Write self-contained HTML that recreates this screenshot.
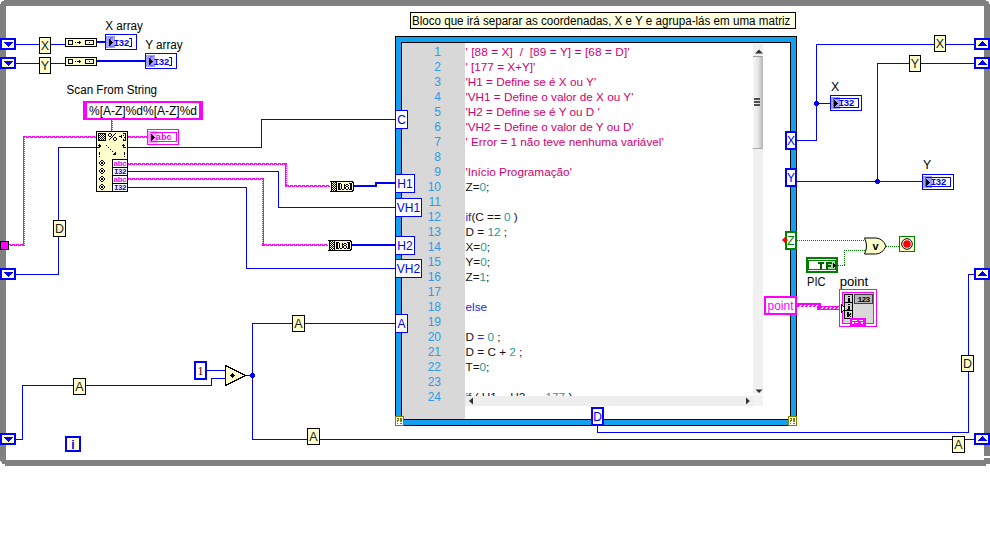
<!DOCTYPE html>
<html><head><meta charset="utf-8"><style>
html,body{margin:0;padding:0;background:#fff;}
svg{display:block;font-family:"Liberation Sans",sans-serif;}
</style></head><body>
<svg width="990" height="543" viewBox="0 0 990 543" shape-rendering="crispEdges">
<rect x="0" y="0" width="990" height="466" fill="#808080"/>
<rect x="6" y="6" width="978" height="454" fill="#FFFFFF"/>
<path d="M0 0h4v1h-2v1h-1v2h-1z" fill="#fff"/>
<path d="M0 461h1v1h1v2h3v2h-5z" fill="#fff"/>
<rect x="984" y="456" width="6" height="2" fill="#fff"/>
<rect x="986" y="464" width="4" height="2" fill="#fff"/>
<path d="M986 0h4v4h-1v-2h-1v-1h-2z" fill="#fff"/>
<rect x="16" y="44" width="23" height="1" fill="#0000FF"/>
<rect x="51" y="44" width="14" height="1" fill="#0000FF"/>
<rect x="97" y="41" width="8" height="2" fill="#0000FF"/>
<rect x="16" y="63" width="23" height="1" fill="#0000FF"/>
<rect x="51" y="63" width="14" height="1" fill="#0000FF"/>
<rect x="97" y="60" width="48" height="2" fill="#0000FF"/>
<rect x="16" y="274" width="43" height="1" fill="#0000FF"/>
<rect x="58" y="147" width="1" height="128" fill="#0000FF"/>
<rect x="58" y="147" width="203" height="1" fill="#0000FF"/>
<rect x="261" y="119" width="1" height="29" fill="#0000FF"/>
<rect x="261" y="119" width="134" height="1" fill="#0000FF"/>
<rect x="128" y="171" width="151" height="1" fill="#0000FF"/>
<rect x="278" y="171" width="1" height="37" fill="#0000FF"/>
<rect x="278" y="207" width="117" height="1" fill="#0000FF"/>
<rect x="128" y="187" width="119" height="1" fill="#0000FF"/>
<rect x="246" y="187" width="1" height="82" fill="#0000FF"/>
<rect x="246" y="268" width="149" height="1" fill="#0000FF"/>
<rect x="354" y="185" width="22" height="2" fill="#0000FF"/>
<rect x="375" y="182" width="2" height="5" fill="#0000FF"/>
<rect x="375" y="182" width="20" height="2" fill="#0000FF"/>
<rect x="351" y="244" width="44" height="2" fill="#0000FF"/>
<rect x="16" y="439" width="7" height="1" fill="#0000FF"/>
<rect x="22" y="385" width="1" height="55" fill="#0000FF"/>
<rect x="22" y="385" width="190" height="1" fill="#0000FF"/>
<rect x="211" y="378" width="1" height="8" fill="#0000FF"/>
<rect x="211" y="378" width="15" height="1" fill="#0000FF"/>
<rect x="207" y="370" width="19" height="1" fill="#0000FF"/>
<rect x="252" y="323" width="1" height="117" fill="#0000FF"/>
<rect x="252" y="323" width="143" height="1" fill="#0000FF"/>
<rect x="252" y="439" width="722" height="1" fill="#0000FF"/>
<rect x="246" y="375" width="6" height="1" fill="#0000FF"/>
<rect x="597" y="425" width="1" height="8" fill="#0000FF"/>
<rect x="597" y="432" width="372" height="1" fill="#0000FF"/>
<rect x="968" y="274" width="1" height="159" fill="#0000FF"/>
<rect x="968" y="274" width="6" height="1" fill="#0000FF"/>
<rect x="797" y="140" width="20" height="1" fill="#0000FF"/>
<rect x="816" y="44" width="1" height="97" fill="#0000FF"/>
<rect x="816" y="44" width="158" height="1" fill="#0000FF"/>
<rect x="797" y="181" width="125" height="1" fill="#0000FF"/>
<rect x="877" y="63" width="1" height="119" fill="#0000FF"/>
<rect x="877" y="63" width="97" height="1" fill="#0000FF"/>
<rect x="816" y="103" width="14" height="1" fill="#0000FF"/>
<circle cx="816.5" cy="103.5" r="2.5" fill="#0000FF"/>
<circle cx="877.5" cy="181.5" r="2.5" fill="#0000FF"/>
<circle cx="252.5" cy="375.5" r="2.5" fill="#0000FF"/>
<defs><pattern id="ph" width="4" height="2" patternUnits="userSpaceOnUse"><rect x="0" y="0" width="3" height="1" fill="#FF00FF"/><rect x="2" y="1" width="2" height="1" fill="#FF00FF"/><rect x="0" y="1" width="1" height="1" fill="#FF00FF"/></pattern><pattern id="pv" width="2" height="4" patternUnits="userSpaceOnUse"><rect x="0" y="0" width="1" height="4" fill="#FF00FF"/><rect x="1" y="0" width="1" height="1" fill="#FF00FF"/><rect x="1" y="2" width="1" height="2" fill="#FF00FF"/></pattern><pattern id="chk2" width="2" height="2" patternUnits="userSpaceOnUse"><rect width="2" height="2" fill="#000"/><rect width="1" height="1" fill="#FFFFCC"/><rect x="1" y="1" width="1" height="1" fill="#FFFFCC"/></pattern><pattern id="chk" width="2" height="2" patternUnits="userSpaceOnUse"><rect width="2" height="2" fill="#fff"/><rect width="1" height="1" fill="#000"/><rect x="1" y="1" width="1" height="1" fill="#000"/></pattern></defs>
<rect x="9" y="244" width="15" height="2" fill="url(#ph)"/>
<rect x="23" y="136" width="1" height="110" fill="#FF00FF"/>
<rect x="24" y="137" width="1" height="1" fill="#FF00FF"/>
<rect x="24" y="139" width="1" height="1" fill="#FF00FF"/>
<rect x="24" y="141" width="1" height="1" fill="#FF00FF"/>
<rect x="24" y="143" width="1" height="1" fill="#FF00FF"/>
<rect x="24" y="145" width="1" height="1" fill="#FF00FF"/>
<rect x="24" y="147" width="1" height="1" fill="#FF00FF"/>
<rect x="24" y="149" width="1" height="1" fill="#FF00FF"/>
<rect x="24" y="151" width="1" height="1" fill="#FF00FF"/>
<rect x="24" y="153" width="1" height="1" fill="#FF00FF"/>
<rect x="24" y="155" width="1" height="1" fill="#FF00FF"/>
<rect x="24" y="157" width="1" height="1" fill="#FF00FF"/>
<rect x="24" y="159" width="1" height="1" fill="#FF00FF"/>
<rect x="24" y="161" width="1" height="1" fill="#FF00FF"/>
<rect x="24" y="163" width="1" height="1" fill="#FF00FF"/>
<rect x="24" y="165" width="1" height="1" fill="#FF00FF"/>
<rect x="24" y="167" width="1" height="1" fill="#FF00FF"/>
<rect x="24" y="169" width="1" height="1" fill="#FF00FF"/>
<rect x="24" y="171" width="1" height="1" fill="#FF00FF"/>
<rect x="24" y="173" width="1" height="1" fill="#FF00FF"/>
<rect x="24" y="175" width="1" height="1" fill="#FF00FF"/>
<rect x="24" y="177" width="1" height="1" fill="#FF00FF"/>
<rect x="24" y="179" width="1" height="1" fill="#FF00FF"/>
<rect x="24" y="181" width="1" height="1" fill="#FF00FF"/>
<rect x="24" y="183" width="1" height="1" fill="#FF00FF"/>
<rect x="24" y="185" width="1" height="1" fill="#FF00FF"/>
<rect x="24" y="187" width="1" height="1" fill="#FF00FF"/>
<rect x="24" y="189" width="1" height="1" fill="#FF00FF"/>
<rect x="24" y="191" width="1" height="1" fill="#FF00FF"/>
<rect x="24" y="193" width="1" height="1" fill="#FF00FF"/>
<rect x="24" y="195" width="1" height="1" fill="#FF00FF"/>
<rect x="24" y="197" width="1" height="1" fill="#FF00FF"/>
<rect x="24" y="199" width="1" height="1" fill="#FF00FF"/>
<rect x="24" y="201" width="1" height="1" fill="#FF00FF"/>
<rect x="24" y="203" width="1" height="1" fill="#FF00FF"/>
<rect x="24" y="205" width="1" height="1" fill="#FF00FF"/>
<rect x="24" y="207" width="1" height="1" fill="#FF00FF"/>
<rect x="24" y="209" width="1" height="1" fill="#FF00FF"/>
<rect x="24" y="211" width="1" height="1" fill="#FF00FF"/>
<rect x="24" y="213" width="1" height="1" fill="#FF00FF"/>
<rect x="24" y="215" width="1" height="1" fill="#FF00FF"/>
<rect x="24" y="217" width="1" height="1" fill="#FF00FF"/>
<rect x="24" y="219" width="1" height="1" fill="#FF00FF"/>
<rect x="24" y="221" width="1" height="1" fill="#FF00FF"/>
<rect x="24" y="223" width="1" height="1" fill="#FF00FF"/>
<rect x="24" y="225" width="1" height="1" fill="#FF00FF"/>
<rect x="24" y="227" width="1" height="1" fill="#FF00FF"/>
<rect x="24" y="229" width="1" height="1" fill="#FF00FF"/>
<rect x="24" y="231" width="1" height="1" fill="#FF00FF"/>
<rect x="24" y="233" width="1" height="1" fill="#FF00FF"/>
<rect x="24" y="235" width="1" height="1" fill="#FF00FF"/>
<rect x="24" y="237" width="1" height="1" fill="#FF00FF"/>
<rect x="24" y="239" width="1" height="1" fill="#FF00FF"/>
<rect x="24" y="241" width="1" height="1" fill="#FF00FF"/>
<rect x="24" y="243" width="1" height="1" fill="#FF00FF"/>
<rect x="24" y="245" width="1" height="1" fill="#FF00FF"/>
<rect x="23" y="136" width="74" height="2" fill="url(#ph)"/>
<rect x="128" y="136" width="19" height="2" fill="url(#ph)"/>
<rect x="111" y="120" width="1" height="11" fill="#FF00FF"/>
<rect x="112" y="121" width="1" height="1" fill="#FF00FF"/>
<rect x="112" y="123" width="1" height="1" fill="#FF00FF"/>
<rect x="112" y="125" width="1" height="1" fill="#FF00FF"/>
<rect x="112" y="127" width="1" height="1" fill="#FF00FF"/>
<rect x="112" y="129" width="1" height="1" fill="#FF00FF"/>
<rect x="128" y="163" width="159" height="2" fill="url(#ph)"/>
<rect x="285" y="163" width="1" height="24" fill="#FF00FF"/>
<rect x="286" y="164" width="1" height="1" fill="#FF00FF"/>
<rect x="286" y="166" width="1" height="1" fill="#FF00FF"/>
<rect x="286" y="168" width="1" height="1" fill="#FF00FF"/>
<rect x="286" y="170" width="1" height="1" fill="#FF00FF"/>
<rect x="286" y="172" width="1" height="1" fill="#FF00FF"/>
<rect x="286" y="174" width="1" height="1" fill="#FF00FF"/>
<rect x="286" y="176" width="1" height="1" fill="#FF00FF"/>
<rect x="286" y="178" width="1" height="1" fill="#FF00FF"/>
<rect x="286" y="180" width="1" height="1" fill="#FF00FF"/>
<rect x="286" y="182" width="1" height="1" fill="#FF00FF"/>
<rect x="286" y="184" width="1" height="1" fill="#FF00FF"/>
<rect x="286" y="186" width="1" height="1" fill="#FF00FF"/>
<rect x="285" y="185" width="45" height="2" fill="url(#ph)"/>
<rect x="128" y="178" width="136" height="2" fill="url(#ph)"/>
<rect x="263" y="178" width="1" height="68" fill="#FF00FF"/>
<rect x="262" y="179" width="1" height="1" fill="#FF00FF"/>
<rect x="262" y="181" width="1" height="1" fill="#FF00FF"/>
<rect x="262" y="183" width="1" height="1" fill="#FF00FF"/>
<rect x="262" y="185" width="1" height="1" fill="#FF00FF"/>
<rect x="262" y="187" width="1" height="1" fill="#FF00FF"/>
<rect x="262" y="189" width="1" height="1" fill="#FF00FF"/>
<rect x="262" y="191" width="1" height="1" fill="#FF00FF"/>
<rect x="262" y="193" width="1" height="1" fill="#FF00FF"/>
<rect x="262" y="195" width="1" height="1" fill="#FF00FF"/>
<rect x="262" y="197" width="1" height="1" fill="#FF00FF"/>
<rect x="262" y="199" width="1" height="1" fill="#FF00FF"/>
<rect x="262" y="201" width="1" height="1" fill="#FF00FF"/>
<rect x="262" y="203" width="1" height="1" fill="#FF00FF"/>
<rect x="262" y="205" width="1" height="1" fill="#FF00FF"/>
<rect x="262" y="207" width="1" height="1" fill="#FF00FF"/>
<rect x="262" y="209" width="1" height="1" fill="#FF00FF"/>
<rect x="262" y="211" width="1" height="1" fill="#FF00FF"/>
<rect x="262" y="213" width="1" height="1" fill="#FF00FF"/>
<rect x="262" y="215" width="1" height="1" fill="#FF00FF"/>
<rect x="262" y="217" width="1" height="1" fill="#FF00FF"/>
<rect x="262" y="219" width="1" height="1" fill="#FF00FF"/>
<rect x="262" y="221" width="1" height="1" fill="#FF00FF"/>
<rect x="262" y="223" width="1" height="1" fill="#FF00FF"/>
<rect x="262" y="225" width="1" height="1" fill="#FF00FF"/>
<rect x="262" y="227" width="1" height="1" fill="#FF00FF"/>
<rect x="262" y="229" width="1" height="1" fill="#FF00FF"/>
<rect x="262" y="231" width="1" height="1" fill="#FF00FF"/>
<rect x="262" y="233" width="1" height="1" fill="#FF00FF"/>
<rect x="262" y="235" width="1" height="1" fill="#FF00FF"/>
<rect x="262" y="237" width="1" height="1" fill="#FF00FF"/>
<rect x="262" y="239" width="1" height="1" fill="#FF00FF"/>
<rect x="262" y="241" width="1" height="1" fill="#FF00FF"/>
<rect x="262" y="243" width="1" height="1" fill="#FF00FF"/>
<rect x="262" y="245" width="1" height="1" fill="#FF00FF"/>
<rect x="262" y="244" width="66" height="2" fill="url(#ph)"/>
<rect x="0" y="38" width="16" height="12" fill="#0000FF"/>
<rect x="2" y="40" width="12" height="8" fill="#FFFFCC"/>
<path d="M3 42h10l-5 5z" fill="#0000FF"/>
<rect x="0" y="57" width="16" height="12" fill="#0000FF"/>
<rect x="2" y="59" width="12" height="8" fill="#FFFFCC"/>
<path d="M3 61h10l-5 5z" fill="#0000FF"/>
<rect x="0" y="268" width="16" height="12" fill="#0000FF"/>
<rect x="2" y="270" width="12" height="8" fill="#FFFFCC"/>
<path d="M3 272h10l-5 5z" fill="#0000FF"/>
<rect x="0" y="433" width="16" height="12" fill="#0000FF"/>
<rect x="2" y="435" width="12" height="8" fill="#FFFFCC"/>
<path d="M3 437h10l-5 5z" fill="#0000FF"/>
<rect x="974" y="38" width="16" height="12" fill="#0000FF"/>
<rect x="976" y="40" width="12" height="8" fill="#FFFFCC"/>
<path d="M977 46h10l-5 -5z" fill="#0000FF"/>
<rect x="974" y="57" width="16" height="12" fill="#0000FF"/>
<rect x="976" y="59" width="12" height="8" fill="#FFFFCC"/>
<path d="M977 65h10l-5 -5z" fill="#0000FF"/>
<rect x="974" y="268" width="16" height="12" fill="#0000FF"/>
<rect x="976" y="270" width="12" height="8" fill="#FFFFCC"/>
<path d="M977 276h10l-5 -5z" fill="#0000FF"/>
<rect x="974" y="433" width="16" height="12" fill="#0000FF"/>
<rect x="976" y="435" width="12" height="8" fill="#FFFFCC"/>
<path d="M977 441h10l-5 -5z" fill="#0000FF"/>
<rect x="0" y="241" width="9" height="9" fill="#000"/>
<rect x="1" y="242" width="7" height="7" fill="#FF00FF"/>
<rect x="39" y="37" width="12" height="17" fill="#000"/>
<rect x="40" y="38" width="10" height="15" fill="#FFFFCC"/>
<text x="45.0" y="50" font-size="12.5" fill="#222" text-anchor="middle" font-weight="normal" >X</text>
<rect x="39" y="57" width="12" height="17" fill="#000"/>
<rect x="40" y="58" width="10" height="15" fill="#FFFFCC"/>
<text x="45.0" y="70" font-size="12.5" fill="#222" text-anchor="middle" font-weight="normal" >Y</text>
<rect x="53" y="220" width="13" height="17" fill="#000"/>
<rect x="54" y="221" width="11" height="15" fill="#FFFFCC"/>
<text x="59.5" y="233" font-size="12.5" fill="#222" text-anchor="middle" font-weight="normal" >D</text>
<rect x="73" y="378" width="13" height="17" fill="#000"/>
<rect x="74" y="379" width="11" height="15" fill="#FFFFCC"/>
<text x="79.5" y="391" font-size="12.5" fill="#222" text-anchor="middle" font-weight="normal" >A</text>
<rect x="292" y="315" width="13" height="17" fill="#000"/>
<rect x="293" y="316" width="11" height="15" fill="#FFFFCC"/>
<text x="298.5" y="328" font-size="12.5" fill="#222" text-anchor="middle" font-weight="normal" >A</text>
<rect x="307" y="428" width="13" height="17" fill="#000"/>
<rect x="308" y="429" width="11" height="15" fill="#FFFFCC"/>
<text x="313.5" y="441" font-size="12.5" fill="#222" text-anchor="middle" font-weight="normal" >A</text>
<rect x="934" y="35" width="12" height="17" fill="#000"/>
<rect x="935" y="36" width="10" height="15" fill="#FFFFCC"/>
<text x="940.0" y="48" font-size="12.5" fill="#222" text-anchor="middle" font-weight="normal" >X</text>
<rect x="909" y="55" width="12" height="17" fill="#000"/>
<rect x="910" y="56" width="10" height="15" fill="#FFFFCC"/>
<text x="915.0" y="68" font-size="12.5" fill="#222" text-anchor="middle" font-weight="normal" >Y</text>
<rect x="961" y="355" width="13" height="17" fill="#000"/>
<rect x="962" y="356" width="11" height="15" fill="#FFFFCC"/>
<text x="967.5" y="368" font-size="12.5" fill="#222" text-anchor="middle" font-weight="normal" >D</text>
<rect x="952" y="436" width="13" height="17" fill="#000"/>
<rect x="953" y="437" width="11" height="15" fill="#FFFFCC"/>
<text x="958.5" y="449" font-size="12.5" fill="#222" text-anchor="middle" font-weight="normal" >A</text>
<rect x="65" y="38" width="32" height="9" fill="#000"/>
<rect x="66" y="39" width="30" height="7" fill="#FFFFCC"/>
<rect x="68" y="40" width="5" height="5" fill="#000"/>
<rect x="69" y="41" width="3" height="3" fill="#FFFFCC"/>
<rect x="75" y="42" width="1" height="1" fill="#000"/>
<rect x="77" y="42" width="1" height="1" fill="#000"/>
<rect x="79" y="41" width="1" height="3" fill="#000"/>
<rect x="78" y="42" width="3" height="1" fill="#000"/>
<rect x="85" y="40" width="9" height="5" fill="#000"/>
<rect x="86" y="41" width="7" height="3" fill="#FFFFCC"/>
<rect x="89" y="42" width="1" height="1" fill="#000"/>
<rect x="65" y="57" width="32" height="9" fill="#000"/>
<rect x="66" y="58" width="30" height="7" fill="#FFFFCC"/>
<rect x="68" y="59" width="5" height="5" fill="#000"/>
<rect x="69" y="60" width="3" height="3" fill="#FFFFCC"/>
<rect x="75" y="61" width="1" height="1" fill="#000"/>
<rect x="77" y="61" width="1" height="1" fill="#000"/>
<rect x="79" y="60" width="1" height="3" fill="#000"/>
<rect x="78" y="61" width="3" height="1" fill="#000"/>
<rect x="85" y="59" width="9" height="5" fill="#000"/>
<rect x="86" y="60" width="7" height="3" fill="#FFFFCC"/>
<rect x="89" y="61" width="1" height="1" fill="#000"/>
<rect x="105" y="34" width="32" height="16" fill="#0000FF"/>
<rect x="106" y="35" width="30" height="14" fill="#fff"/>
<rect x="106" y="36" width="9" height="12" fill="#A0A0FF"/>
<rect x="110" y="37" width="3" height="1" fill="#6060FF"/>
<rect x="110" y="37" width="1" height="10" fill="#6060FF"/>
<rect x="110" y="46" width="3" height="1" fill="#6060FF"/>
<rect x="109" y="39" width="1" height="7" fill="#000"/>
<rect x="110" y="40" width="1" height="5" fill="#000"/>
<rect x="111" y="41" width="1" height="3" fill="#000"/>
<rect x="112" y="42" width="1" height="1" fill="#000"/>
<text x="113.5" y="45.5" font-size="9.5" fill="#0000FF" text-anchor="start" font-weight="bold" font-family="Liberation Mono" letter-spacing="-0.6">I32</text>
<rect x="129" y="38" width="3" height="1" fill="#0000FF"/>
<rect x="131" y="38" width="1" height="9" fill="#0000FF"/>
<rect x="129" y="46" width="3" height="1" fill="#0000FF"/>
<rect x="145" y="53" width="32" height="16" fill="#0000FF"/>
<rect x="146" y="54" width="30" height="14" fill="#fff"/>
<rect x="146" y="55" width="9" height="12" fill="#A0A0FF"/>
<rect x="150" y="56" width="3" height="1" fill="#6060FF"/>
<rect x="150" y="56" width="1" height="10" fill="#6060FF"/>
<rect x="150" y="65" width="3" height="1" fill="#6060FF"/>
<rect x="149" y="58" width="1" height="7" fill="#000"/>
<rect x="150" y="59" width="1" height="5" fill="#000"/>
<rect x="151" y="60" width="1" height="3" fill="#000"/>
<rect x="152" y="61" width="1" height="1" fill="#000"/>
<text x="153.5" y="64.5" font-size="9.5" fill="#0000FF" text-anchor="start" font-weight="bold" font-family="Liberation Mono" letter-spacing="-0.6">I32</text>
<rect x="169" y="57" width="3" height="1" fill="#0000FF"/>
<rect x="171" y="57" width="1" height="9" fill="#0000FF"/>
<rect x="169" y="65" width="3" height="1" fill="#0000FF"/>
<text x="105.3" y="30" font-size="12.3" fill="#000" text-anchor="start" font-weight="normal" textLength="37.5" lengthAdjust="spacingAndGlyphs">X array</text>
<text x="145.2" y="48.6" font-size="12.3" fill="#000" text-anchor="start" font-weight="normal" textLength="37.5" lengthAdjust="spacingAndGlyphs">Y array</text>
<text x="66.6" y="93.7" font-size="12.3" fill="#000" text-anchor="start" font-weight="normal" textLength="90.5" lengthAdjust="spacingAndGlyphs">Scan From String</text>
<rect x="83" y="101" width="120" height="19" fill="#FF00FF"/>
<rect x="87" y="103" width="112" height="15" fill="#fff"/>
<text x="89" y="115" font-size="12" fill="#000" text-anchor="start" font-weight="normal" >%[A-Z]%d%[A-Z]%d</text>
<rect x="96" y="131" width="32" height="61" fill="#000"/>
<rect x="97" y="132" width="30" height="59" fill="#FFFFCC"/>
<rect x="98" y="133" width="8" height="8" fill="#000"/>
<rect x="99" y="134" width="6" height="6" fill="url(#chk)"/>
<path d="M108 134h1v-1h2v1h1v2h-1v1h-2v-1h-1z M110 134h0" fill="#000"/>
<rect x="109" y="134" width="2" height="2" fill="#FFFFCC"/>
<path d="M115 133h1v1h-1v1h-1v1h-1v1h-1v1h-1v1h-1v1h-1v-1h1v-1h1v-1h1v-1h1v-1h1v-1h1z" fill="#000"/>
<path d="M113 138h1v-1h2v1h1v2h-1v1h-2v-1h-1z" fill="#000"/>
<rect x="114" y="138" width="2" height="2" fill="#FFFFCC"/>
<rect x="119" y="136" width="3" height="1" fill="#000"/>
<rect x="121" y="135" width="1" height="3" fill="#000"/>
<rect x="123" y="133" width="3" height="1" fill="#000"/>
<rect x="123" y="140" width="3" height="1" fill="#000"/>
<rect x="125" y="133" width="1" height="8" fill="#000"/>
<rect x="123" y="135" width="1" height="1" fill="#000"/>
<rect x="124" y="137" width="1" height="1" fill="#000"/>
<rect x="123" y="139" width="1" height="1" fill="#000"/>
<rect x="99" y="144" width="1" height="4" fill="#000"/>
<rect x="98" y="145" width="3" height="1" fill="#000"/>
<rect x="97" y="147" width="3" height="1" fill="#000"/>
<rect x="100" y="146" width="1" height="1" fill="#000"/>
<rect x="106" y="145" width="1" height="1" fill="#000"/>
<rect x="108" y="147" width="1" height="1" fill="#000"/>
<rect x="110" y="149" width="1" height="1" fill="#000"/>
<rect x="112" y="151" width="1" height="1" fill="#000"/>
<path d="M116 151v4h-4z" fill="#000"/>
<rect x="123" y="144" width="1" height="4" fill="#000"/>
<rect x="122" y="145" width="3" height="1" fill="#000"/>
<rect x="123" y="147" width="3" height="1" fill="#000"/>
<rect x="99" y="152" width="1" height="3" fill="#000"/>
<rect x="99" y="156" width="1" height="1" fill="#000"/>
<rect x="124" y="152" width="1" height="3" fill="#000"/>
<rect x="124" y="156" width="1" height="1" fill="#000"/>
<rect x="112" y="159" width="16" height="33" fill="#000"/>
<rect x="113" y="160" width="14" height="7" fill="#fff"/>
<text x="120" y="166" font-size="8" fill="#FF00FF" text-anchor="middle" font-weight="bold" letter-spacing="-0.3">abc</text>
<rect x="101" y="160" width="2" height="1" fill="#000"/>
<rect x="100" y="161" width="1" height="1" fill="#000"/>
<rect x="103" y="161" width="1" height="1" fill="#000"/>
<rect x="99" y="162" width="1" height="2" fill="#000"/>
<rect x="104" y="162" width="1" height="2" fill="#000"/>
<rect x="101" y="162" width="2" height="2" fill="#000"/>
<rect x="100" y="164" width="1" height="1" fill="#000"/>
<rect x="103" y="164" width="1" height="1" fill="#000"/>
<rect x="101" y="165" width="2" height="1" fill="#000"/>
<rect x="113" y="168" width="14" height="7" fill="#fff"/>
<text x="120" y="174" font-size="7.5" fill="#0000FF" text-anchor="middle" font-weight="bold" font-family="Liberation Mono" letter-spacing="-0.5">I32</text>
<rect x="101" y="168" width="2" height="1" fill="#000"/>
<rect x="100" y="169" width="1" height="1" fill="#000"/>
<rect x="103" y="169" width="1" height="1" fill="#000"/>
<rect x="99" y="170" width="1" height="2" fill="#000"/>
<rect x="104" y="170" width="1" height="2" fill="#000"/>
<rect x="101" y="170" width="2" height="2" fill="#000"/>
<rect x="100" y="172" width="1" height="1" fill="#000"/>
<rect x="103" y="172" width="1" height="1" fill="#000"/>
<rect x="101" y="173" width="2" height="1" fill="#000"/>
<rect x="113" y="176" width="14" height="7" fill="#fff"/>
<text x="120" y="182" font-size="8" fill="#FF00FF" text-anchor="middle" font-weight="bold" letter-spacing="-0.3">abc</text>
<rect x="101" y="176" width="2" height="1" fill="#000"/>
<rect x="100" y="177" width="1" height="1" fill="#000"/>
<rect x="103" y="177" width="1" height="1" fill="#000"/>
<rect x="99" y="178" width="1" height="2" fill="#000"/>
<rect x="104" y="178" width="1" height="2" fill="#000"/>
<rect x="101" y="178" width="2" height="2" fill="#000"/>
<rect x="100" y="180" width="1" height="1" fill="#000"/>
<rect x="103" y="180" width="1" height="1" fill="#000"/>
<rect x="101" y="181" width="2" height="1" fill="#000"/>
<rect x="113" y="184" width="14" height="7" fill="#fff"/>
<text x="120" y="190" font-size="7.5" fill="#0000FF" text-anchor="middle" font-weight="bold" font-family="Liberation Mono" letter-spacing="-0.5">I32</text>
<rect x="101" y="184" width="2" height="1" fill="#000"/>
<rect x="100" y="185" width="1" height="1" fill="#000"/>
<rect x="103" y="185" width="1" height="1" fill="#000"/>
<rect x="99" y="186" width="1" height="2" fill="#000"/>
<rect x="104" y="186" width="1" height="2" fill="#000"/>
<rect x="101" y="186" width="2" height="2" fill="#000"/>
<rect x="100" y="188" width="1" height="1" fill="#000"/>
<rect x="103" y="188" width="1" height="1" fill="#000"/>
<rect x="101" y="189" width="2" height="1" fill="#000"/>
<rect x="127" y="159" width="1" height="33" fill="#000"/>
<rect x="147" y="129" width="32" height="16" fill="#FF00FF"/>
<rect x="148" y="130" width="30" height="14" fill="#fff"/>
<rect x="148" y="131" width="9" height="12" fill="#FFA0FF"/>
<rect x="150" y="132" width="27" height="1" fill="#FF00FF"/>
<rect x="150" y="141" width="27" height="1" fill="#FF00FF"/>
<rect x="150" y="132" width="1" height="10" fill="#FF60FF"/>
<rect x="176" y="132" width="1" height="10" fill="#FF00FF"/>
<rect x="151" y="134" width="1" height="7" fill="#000"/>
<rect x="152" y="135" width="1" height="5" fill="#000"/>
<rect x="153" y="136" width="1" height="3" fill="#000"/>
<rect x="154" y="137" width="1" height="1" fill="#000"/>
<text x="155.5" y="140" font-size="9.5" fill="#FF00FF" text-anchor="start" font-weight="bold" font-family="Liberation Mono" letter-spacing="-0.3">abc</text>
<path d="M329 181h23l2 2v7l-2 2h-23l2 -2v-7z" fill="#000"/>
<rect x="332" y="182" width="4" height="9" fill="url(#chk2)"/>
<path d="M337 182h14l2 2v5l-2 2h-14z" fill="#FFFFCC"/>
<rect x="338" y="183" width="2" height="7" fill="#000"/>
<rect x="340" y="183" width="1" height="1" fill="#000"/>
<rect x="340" y="189" width="1" height="1" fill="#000"/>
<rect x="350" y="183" width="2" height="7" fill="#000"/>
<rect x="349" y="183" width="1" height="1" fill="#000"/>
<rect x="349" y="189" width="1" height="1" fill="#000"/>
<rect x="341" y="184" width="1" height="5" fill="#000"/>
<rect x="342" y="189" width="2" height="1" fill="#000"/>
<rect x="344" y="184" width="1" height="5" fill="#000"/>
<rect x="346" y="184" width="2" height="1" fill="#000"/>
<rect x="345" y="185" width="1" height="1" fill="#000"/>
<rect x="348" y="185" width="1" height="1" fill="#000"/>
<rect x="346" y="186" width="2" height="1" fill="#000"/>
<rect x="345" y="187" width="1" height="2" fill="#000"/>
<rect x="348" y="187" width="1" height="2" fill="#000"/>
<rect x="346" y="189" width="2" height="1" fill="#000"/>
<path d="M327 240h23l2 2v7l-2 2h-23l2 -2v-7z" fill="#000"/>
<rect x="330" y="241" width="4" height="9" fill="url(#chk2)"/>
<path d="M335 241h14l2 2v5l-2 2h-14z" fill="#FFFFCC"/>
<rect x="336" y="242" width="2" height="7" fill="#000"/>
<rect x="338" y="242" width="1" height="1" fill="#000"/>
<rect x="338" y="248" width="1" height="1" fill="#000"/>
<rect x="348" y="242" width="2" height="7" fill="#000"/>
<rect x="347" y="242" width="1" height="1" fill="#000"/>
<rect x="347" y="248" width="1" height="1" fill="#000"/>
<rect x="339" y="243" width="1" height="5" fill="#000"/>
<rect x="340" y="248" width="2" height="1" fill="#000"/>
<rect x="342" y="243" width="1" height="5" fill="#000"/>
<rect x="344" y="243" width="2" height="1" fill="#000"/>
<rect x="343" y="244" width="1" height="1" fill="#000"/>
<rect x="346" y="244" width="1" height="1" fill="#000"/>
<rect x="344" y="245" width="2" height="1" fill="#000"/>
<rect x="343" y="246" width="1" height="2" fill="#000"/>
<rect x="346" y="246" width="1" height="2" fill="#000"/>
<rect x="344" y="248" width="2" height="1" fill="#000"/>
<rect x="395" y="36" width="402" height="390" fill="#000"/>
<rect x="396" y="37" width="400" height="388" fill="#14A0F0"/>
<rect x="401" y="42" width="390" height="378" fill="#000"/>
<rect x="402" y="43" width="388" height="376" fill="#fff"/>
<rect x="402" y="43" width="63" height="376" fill="#D8D8D8"/>
<defs><linearGradient id="thumb" x1="0" x2="1" y1="0" y2="0"><stop offset="0" stop-color="#F6F6F6"/><stop offset="0.5" stop-color="#E6E6E6"/><stop offset="1" stop-color="#B4B4B4"/></linearGradient></defs>
<rect x="753" y="44" width="10" height="350" fill="#F0F0F0"/>
<rect x="753" y="56" width="10" height="93" fill="url(#thumb)"/>
<rect x="753" y="56" width="9" height="1" fill="#9A9A9A"/>
<rect x="753" y="148" width="9" height="1" fill="#A8A8A8"/>
<rect x="465" y="396" width="288" height="10" fill="#EEEEEE"/>
<rect x="753" y="395" width="10" height="11" fill="#F2F2F2"/>
<path d="M755 53.5h8l-4 -4z" fill="#333" shape-rendering="auto"/>
<path d="M755.5 389.5h7l-3.5 3.5z" fill="#333" shape-rendering="auto"/>
<path d="M473 397.5v7l-4 -3.5z" fill="#333" shape-rendering="auto"/>
<path d="M746 397.5v7l3.8 -3.5z" fill="#333" shape-rendering="auto"/>
<rect x="754" y="98" width="6" height="2" fill="#505050"/>
<rect x="754" y="101" width="6" height="2" fill="#505050"/>
<rect x="754" y="104" width="6" height="2" fill="#505050"/>
<clipPath id="cc"><rect x="465" y="43" width="288" height="353"/></clipPath>
<g clip-path="url(#cc)">
<text x="465.5" y="55.5" font-size="11.75" xml:space="preserve" style="white-space:pre" textLength="164" lengthAdjust="spacing"><tspan fill="#D4006E">' [88 = X]  /  [89 = Y] = [68 = D]'</tspan></text>
<text x="465.5" y="70.5" font-size="11.75" xml:space="preserve" style="white-space:pre"><tspan fill="#D4006E">' [177 = X+Y]'</tspan></text>
<text x="465.5" y="85.5" font-size="11.75" xml:space="preserve" style="white-space:pre"><tspan fill="#D4006E">'H1 = Define se é X ou Y'</tspan></text>
<text x="465.5" y="100.5" font-size="11.75" xml:space="preserve" style="white-space:pre"><tspan fill="#D4006E">'VH1 = Define o valor de X ou Y'</tspan></text>
<text x="465.5" y="115.5" font-size="11.75" xml:space="preserve" style="white-space:pre"><tspan fill="#D4006E">'H2 = Define se é Y ou D '</tspan></text>
<text x="465.5" y="130.5" font-size="11.75" xml:space="preserve" style="white-space:pre"><tspan fill="#D4006E">'VH2 = Define o valor de Y ou D'</tspan></text>
<text x="465.5" y="145.5" font-size="11.75" xml:space="preserve" style="white-space:pre"><tspan fill="#D4006E">' Error = 1 não teve nenhuma variável'</tspan></text>
<text x="465.5" y="175.5" font-size="11.75" xml:space="preserve" style="white-space:pre"><tspan fill="#D4006E">'Início Programação'</tspan></text>
<text x="465.5" y="190.5" font-size="11.75" xml:space="preserve" style="white-space:pre"><tspan fill="#141414">Z=</tspan><tspan fill="#1A9C9C">0</tspan><tspan fill="#141414">;</tspan></text>
<text x="465.5" y="220.5" font-size="11.75" xml:space="preserve" style="white-space:pre"><tspan fill="#2424E6">if</tspan><tspan fill="#141414">(C == </tspan><tspan fill="#1A9C9C">0</tspan><tspan fill="#141414"> )</tspan></text>
<text x="465.5" y="235.5" font-size="11.75" xml:space="preserve" style="white-space:pre"><tspan fill="#141414">D = </tspan><tspan fill="#1A9C9C">12</tspan><tspan fill="#141414"> ;</tspan></text>
<text x="465.5" y="250.5" font-size="11.75" xml:space="preserve" style="white-space:pre"><tspan fill="#141414">X=</tspan><tspan fill="#1A9C9C">0</tspan><tspan fill="#141414">;</tspan></text>
<text x="465.5" y="265.5" font-size="11.75" xml:space="preserve" style="white-space:pre"><tspan fill="#141414">Y=</tspan><tspan fill="#1A9C9C">0</tspan><tspan fill="#141414">;</tspan></text>
<text x="465.5" y="280.5" font-size="11.75" xml:space="preserve" style="white-space:pre"><tspan fill="#141414">Z=</tspan><tspan fill="#1A9C9C">1</tspan><tspan fill="#141414">;</tspan></text>
<text x="465.5" y="310.5" font-size="11.75" xml:space="preserve" style="white-space:pre"><tspan fill="#2424E6">else</tspan></text>
<text x="465.5" y="340.5" font-size="11.75" xml:space="preserve" style="white-space:pre"><tspan fill="#141414">D </tspan><tspan fill="#2424E6">=</tspan><tspan fill="#141414"> </tspan><tspan fill="#1A9C9C">0</tspan><tspan fill="#141414"> ;</tspan></text>
<text x="465.5" y="355.5" font-size="11.75" xml:space="preserve" style="white-space:pre"><tspan fill="#141414">D = C + </tspan><tspan fill="#1A9C9C">2</tspan><tspan fill="#141414"> ;</tspan></text>
<text x="465.5" y="370.5" font-size="11.75" xml:space="preserve" style="white-space:pre"><tspan fill="#141414">T=</tspan><tspan fill="#1A9C9C">0</tspan><tspan fill="#141414">;</tspan></text>
<text x="465.5" y="400.5" font-size="11.75" xml:space="preserve" style="white-space:pre"><tspan fill="#2424E6">if</tspan><tspan fill="#141414"> ( H1 </tspan><tspan fill="transparent">+</tspan><tspan fill="#141414"> H2 </tspan><tspan fill="transparent">==</tspan><tspan fill="#141414"> </tspan><tspan fill="#1A9C9C">177</tspan><tspan fill="#141414"> )</tspan></text>
</g>
<text x="441" y="56" font-size="12" fill="#2A9CE8" text-anchor="end" font-weight="normal" >1</text>
<text x="441" y="71" font-size="12" fill="#2A9CE8" text-anchor="end" font-weight="normal" >2</text>
<text x="441" y="86" font-size="12" fill="#2A9CE8" text-anchor="end" font-weight="normal" >3</text>
<text x="441" y="101" font-size="12" fill="#2A9CE8" text-anchor="end" font-weight="normal" >4</text>
<text x="441" y="116" font-size="12" fill="#2A9CE8" text-anchor="end" font-weight="normal" >5</text>
<text x="441" y="131" font-size="12" fill="#2A9CE8" text-anchor="end" font-weight="normal" >6</text>
<text x="441" y="146" font-size="12" fill="#2A9CE8" text-anchor="end" font-weight="normal" >7</text>
<text x="441" y="161" font-size="12" fill="#2A9CE8" text-anchor="end" font-weight="normal" >8</text>
<text x="441" y="176" font-size="12" fill="#2A9CE8" text-anchor="end" font-weight="normal" >9</text>
<text x="441" y="191" font-size="12" fill="#2A9CE8" text-anchor="end" font-weight="normal" >10</text>
<text x="441" y="206" font-size="12" fill="#2A9CE8" text-anchor="end" font-weight="normal" >11</text>
<text x="441" y="221" font-size="12" fill="#2A9CE8" text-anchor="end" font-weight="normal" >12</text>
<text x="441" y="236" font-size="12" fill="#2A9CE8" text-anchor="end" font-weight="normal" >13</text>
<text x="441" y="251" font-size="12" fill="#2A9CE8" text-anchor="end" font-weight="normal" >14</text>
<text x="441" y="266" font-size="12" fill="#2A9CE8" text-anchor="end" font-weight="normal" >15</text>
<text x="441" y="281" font-size="12" fill="#2A9CE8" text-anchor="end" font-weight="normal" >16</text>
<text x="441" y="296" font-size="12" fill="#2A9CE8" text-anchor="end" font-weight="normal" >17</text>
<text x="441" y="311" font-size="12" fill="#2A9CE8" text-anchor="end" font-weight="normal" >18</text>
<text x="441" y="326" font-size="12" fill="#2A9CE8" text-anchor="end" font-weight="normal" >19</text>
<text x="441" y="341" font-size="12" fill="#2A9CE8" text-anchor="end" font-weight="normal" >20</text>
<text x="441" y="356" font-size="12" fill="#2A9CE8" text-anchor="end" font-weight="normal" >21</text>
<text x="441" y="371" font-size="12" fill="#2A9CE8" text-anchor="end" font-weight="normal" >22</text>
<text x="441" y="386" font-size="12" fill="#2A9CE8" text-anchor="end" font-weight="normal" >23</text>
<text x="441" y="401" font-size="12" fill="#2A9CE8" text-anchor="end" font-weight="normal" >24</text>
<rect x="395" y="110" width="13" height="19" fill="#0000FF"/>
<rect x="396" y="111" width="11" height="17" fill="#fff"/>
<text x="401.5" y="124" font-size="12" fill="#0000FF" text-anchor="middle" font-weight="normal" >C</text>
<rect x="395" y="174" width="20" height="19" fill="#0000FF"/>
<rect x="396" y="175" width="18" height="17" fill="#fff"/>
<text x="405.0" y="188" font-size="12" fill="#0000FF" text-anchor="middle" font-weight="normal" >H1</text>
<rect x="395" y="198" width="27" height="19" fill="#0000FF"/>
<rect x="396" y="199" width="25" height="17" fill="#fff"/>
<text x="408.5" y="212" font-size="12" fill="#0000FF" text-anchor="middle" font-weight="normal" >VH1</text>
<rect x="395" y="236" width="20" height="19" fill="#0000FF"/>
<rect x="396" y="237" width="18" height="17" fill="#fff"/>
<text x="405.0" y="250" font-size="12" fill="#0000FF" text-anchor="middle" font-weight="normal" >H2</text>
<rect x="395" y="259" width="27" height="19" fill="#0000FF"/>
<rect x="396" y="260" width="25" height="17" fill="#fff"/>
<text x="408.5" y="273" font-size="12" fill="#0000FF" text-anchor="middle" font-weight="normal" >VH2</text>
<rect x="395" y="314" width="13" height="19" fill="#0000FF"/>
<rect x="396" y="315" width="11" height="17" fill="#fff"/>
<text x="401.5" y="328" font-size="12" fill="#0000FF" text-anchor="middle" font-weight="normal" >A</text>
<rect x="785" y="131" width="12" height="19" fill="#0000FF"/>
<rect x="787" y="133" width="8" height="15" fill="#fff"/>
<text x="791.0" y="145" font-size="12" fill="#0000FF" text-anchor="middle" font-weight="normal" >X</text>
<rect x="785" y="168" width="12" height="19" fill="#0000FF"/>
<rect x="787" y="170" width="8" height="15" fill="#fff"/>
<text x="791.0" y="182" font-size="12" fill="#0000FF" text-anchor="middle" font-weight="normal" >Y</text>
<rect x="785" y="231" width="12" height="19" fill="#008000"/>
<rect x="787" y="233" width="8" height="15" fill="#fff"/>
<text x="791.0" y="245" font-size="12" fill="#008000" text-anchor="middle" font-weight="normal" >Z</text>
<rect x="591" y="407" width="13" height="19" fill="#0000FF"/>
<rect x="593" y="409" width="9" height="15" fill="#fff"/>
<text x="597.5" y="421" font-size="12" fill="#0000FF" text-anchor="middle" font-weight="normal" >D</text>
<rect x="764" y="296" width="33" height="19" fill="#FF00FF"/>
<rect x="766" y="298" width="29" height="15" fill="#fff"/>
<text x="780.5" y="310" font-size="12" fill="#FF00FF" text-anchor="middle" font-weight="normal" >point</text>
<rect x="395" y="416" width="9" height="10" fill="#808000"/>
<rect x="396" y="417" width="7" height="8" fill="#fff"/>
<rect x="397" y="418" width="2" height="1" fill="#808000"/>
<rect x="398" y="419" width="1" height="2" fill="#808000"/>
<rect x="397" y="420" width="2" height="1" fill="#808000"/>
<rect x="397" y="421" width="1" height="1" fill="#808000"/>
<rect x="397" y="423" width="1" height="1" fill="#808000"/>
<rect x="400" y="418" width="2" height="4" fill="#808000"/>
<rect x="400" y="423" width="2" height="1" fill="#808000"/>
<rect x="788" y="416" width="9" height="10" fill="#808000"/>
<rect x="789" y="417" width="7" height="8" fill="#fff"/>
<rect x="790" y="418" width="2" height="1" fill="#808000"/>
<rect x="791" y="419" width="1" height="2" fill="#808000"/>
<rect x="790" y="420" width="2" height="1" fill="#808000"/>
<rect x="790" y="421" width="1" height="1" fill="#808000"/>
<rect x="790" y="423" width="1" height="1" fill="#808000"/>
<rect x="793" y="418" width="2" height="4" fill="#808000"/>
<rect x="793" y="423" width="2" height="1" fill="#808000"/>
<rect x="410" y="12" width="386" height="17" fill="#000"/>
<rect x="411" y="13" width="384" height="15" fill="#FFFFE1"/>
<text x="411.9" y="24.8" font-size="12" fill="#000" text-anchor="start" font-weight="normal" textLength="378.5" lengthAdjust="spacingAndGlyphs">Bloco que irá separar as coordenadas, X e Y e agrupa-lás em uma matriz</text>
<path d="M225.5 365.5v20l20 -10z" fill="#FFFFCC" stroke="#000"/>
<rect x="230" y="375" width="5" height="1" fill="#000"/>
<rect x="232" y="373" width="1" height="5" fill="#000"/>
<rect x="231" y="374" width="3" height="3" fill="#000"/>
<rect x="194" y="361" width="13" height="19" fill="#0000FF"/>
<rect x="196" y="363" width="9" height="15" fill="#fff"/>
<text x="200.5" y="375" font-size="12" fill="#300" text-anchor="middle" font-weight="normal" font-family="Liberation Serif">1</text>
<rect x="65" y="436" width="16" height="16" fill="#0000FF"/>
<rect x="67" y="438" width="12" height="12" fill="#FFFFCC"/>
<text x="73" y="449" font-size="12" fill="#0000FF" text-anchor="middle" font-weight="bold" >i</text>
<rect x="830" y="95" width="32" height="16" fill="#0000FF"/>
<rect x="831" y="96" width="30" height="14" fill="#fff"/>
<rect x="831" y="97" width="9" height="12" fill="#A0A0FF"/>
<rect x="833" y="98" width="26" height="1" fill="#0000FF"/>
<rect x="833" y="107" width="26" height="1" fill="#0000FF"/>
<rect x="833" y="98" width="1" height="10" fill="#6060FF"/>
<rect x="858" y="98" width="1" height="10" fill="#0000FF"/>
<rect x="834" y="100" width="1" height="7" fill="#000"/>
<rect x="835" y="101" width="1" height="5" fill="#000"/>
<rect x="836" y="102" width="1" height="3" fill="#000"/>
<rect x="837" y="103" width="1" height="1" fill="#000"/>
<text x="838.5" y="105.7" font-size="9.5" fill="#0000FF" text-anchor="start" font-weight="bold" font-family="Liberation Mono" letter-spacing="-0.6">I32</text>
<text x="831" y="90.6" font-size="12.3" fill="#000" text-anchor="start" font-weight="normal" >X</text>
<rect x="922" y="174" width="32" height="16" fill="#0000FF"/>
<rect x="923" y="175" width="30" height="14" fill="#fff"/>
<rect x="923" y="176" width="9" height="12" fill="#A0A0FF"/>
<rect x="925" y="177" width="26" height="1" fill="#0000FF"/>
<rect x="925" y="186" width="26" height="1" fill="#0000FF"/>
<rect x="925" y="177" width="1" height="10" fill="#6060FF"/>
<rect x="950" y="177" width="1" height="10" fill="#0000FF"/>
<rect x="926" y="179" width="1" height="7" fill="#000"/>
<rect x="927" y="180" width="1" height="5" fill="#000"/>
<rect x="928" y="181" width="1" height="3" fill="#000"/>
<rect x="929" y="182" width="1" height="1" fill="#000"/>
<text x="930.5" y="184.7" font-size="9.5" fill="#0000FF" text-anchor="start" font-weight="bold" font-family="Liberation Mono" letter-spacing="-0.6">I32</text>
<text x="923" y="169.3" font-size="12.3" fill="#000" text-anchor="start" font-weight="normal" >Y</text>
<rect x="797" y="240" width="1" height="1" fill="#008000"/>
<rect x="799" y="240" width="1" height="1" fill="#008000"/>
<rect x="801" y="240" width="1" height="1" fill="#008000"/>
<rect x="803" y="240" width="1" height="1" fill="#008000"/>
<rect x="805" y="240" width="1" height="1" fill="#008000"/>
<rect x="807" y="240" width="1" height="1" fill="#008000"/>
<rect x="809" y="240" width="1" height="1" fill="#008000"/>
<rect x="811" y="240" width="1" height="1" fill="#008000"/>
<rect x="813" y="240" width="1" height="1" fill="#008000"/>
<rect x="815" y="240" width="1" height="1" fill="#008000"/>
<rect x="817" y="240" width="1" height="1" fill="#008000"/>
<rect x="819" y="240" width="1" height="1" fill="#008000"/>
<rect x="821" y="240" width="1" height="1" fill="#008000"/>
<rect x="823" y="240" width="1" height="1" fill="#008000"/>
<rect x="825" y="240" width="1" height="1" fill="#008000"/>
<rect x="827" y="240" width="1" height="1" fill="#008000"/>
<rect x="829" y="240" width="1" height="1" fill="#008000"/>
<rect x="831" y="240" width="1" height="1" fill="#008000"/>
<rect x="833" y="240" width="1" height="1" fill="#008000"/>
<rect x="835" y="240" width="1" height="1" fill="#008000"/>
<rect x="837" y="240" width="1" height="1" fill="#008000"/>
<rect x="839" y="240" width="1" height="1" fill="#008000"/>
<rect x="841" y="240" width="1" height="1" fill="#008000"/>
<rect x="843" y="240" width="1" height="1" fill="#008000"/>
<rect x="845" y="240" width="1" height="1" fill="#008000"/>
<rect x="847" y="240" width="1" height="1" fill="#008000"/>
<rect x="849" y="240" width="1" height="1" fill="#008000"/>
<rect x="851" y="240" width="1" height="1" fill="#008000"/>
<rect x="853" y="240" width="1" height="1" fill="#008000"/>
<rect x="855" y="240" width="1" height="1" fill="#008000"/>
<rect x="857" y="240" width="1" height="1" fill="#008000"/>
<rect x="859" y="240" width="1" height="1" fill="#008000"/>
<rect x="861" y="240" width="1" height="1" fill="#008000"/>
<rect x="863" y="240" width="1" height="1" fill="#008000"/>
<rect x="838" y="265" width="1" height="1" fill="#008000"/>
<rect x="840" y="265" width="1" height="1" fill="#008000"/>
<rect x="842" y="265" width="1" height="1" fill="#008000"/>
<rect x="844" y="265" width="1" height="1" fill="#008000"/>
<rect x="844" y="250" width="1" height="1" fill="#008000"/>
<rect x="844" y="252" width="1" height="1" fill="#008000"/>
<rect x="844" y="254" width="1" height="1" fill="#008000"/>
<rect x="844" y="256" width="1" height="1" fill="#008000"/>
<rect x="844" y="258" width="1" height="1" fill="#008000"/>
<rect x="844" y="260" width="1" height="1" fill="#008000"/>
<rect x="844" y="262" width="1" height="1" fill="#008000"/>
<rect x="844" y="264" width="1" height="1" fill="#008000"/>
<rect x="844" y="250" width="1" height="1" fill="#008000"/>
<rect x="846" y="250" width="1" height="1" fill="#008000"/>
<rect x="848" y="250" width="1" height="1" fill="#008000"/>
<rect x="850" y="250" width="1" height="1" fill="#008000"/>
<rect x="852" y="250" width="1" height="1" fill="#008000"/>
<rect x="854" y="250" width="1" height="1" fill="#008000"/>
<rect x="856" y="250" width="1" height="1" fill="#008000"/>
<rect x="858" y="250" width="1" height="1" fill="#008000"/>
<rect x="860" y="250" width="1" height="1" fill="#008000"/>
<rect x="862" y="250" width="1" height="1" fill="#008000"/>
<rect x="864" y="250" width="1" height="1" fill="#008000"/>
<rect x="886" y="246" width="1" height="1" fill="#008000"/>
<rect x="888" y="246" width="1" height="1" fill="#008000"/>
<rect x="890" y="246" width="1" height="1" fill="#008000"/>
<rect x="892" y="246" width="1" height="1" fill="#008000"/>
<rect x="894" y="246" width="1" height="1" fill="#008000"/>
<rect x="896" y="246" width="1" height="1" fill="#008000"/>
<rect x="898" y="246" width="1" height="1" fill="#008000"/>
<path d="M864.5 238h11q7 0 10.5 8q-3.5 8 -10.5 8h-11q4 -8 0 -16z" fill="#FFFFCC" stroke="#000" shape-rendering="auto"/>
<text x="875.5" y="250" font-size="11" fill="#000" text-anchor="middle" font-weight="bold" >v</text>
<rect x="899" y="236" width="16" height="16" fill="#008000"/>
<rect x="900" y="237" width="14" height="14" fill="#FFFFCC"/>
<circle cx="907" cy="244" r="5.3" fill="#fff" stroke="#000" stroke-width="1" shape-rendering="auto"/>
<circle cx="907" cy="244" r="3.8" fill="#F00" shape-rendering="auto"/>
<path d="M782 240l3 -3l3 3l-3 3z" fill="#F00" shape-rendering="auto"/>
<rect x="806" y="257" width="32" height="16" fill="#008000"/>
<rect x="808" y="259" width="28" height="12" fill="#fff"/>
<rect x="808" y="260" width="28" height="10" fill="#008000"/>
<rect x="809" y="261" width="26" height="8" fill="#fff"/>
<rect x="828" y="261" width="7" height="8" fill="#A8D8A8"/>
<rect x="818" y="262" width="6" height="2" fill="#006000"/>
<rect x="820" y="264" width="2" height="5" fill="#006000"/>
<rect x="826" y="262" width="2" height="7" fill="#006000"/>
<rect x="828" y="262" width="4" height="2" fill="#006000"/>
<rect x="828" y="265" width="3" height="2" fill="#006000"/>
<rect x="833" y="263" width="1" height="5" fill="#000"/>
<rect x="834" y="264" width="1" height="3" fill="#000"/>
<rect x="835" y="265" width="1" height="1" fill="#000"/>
<text x="807" y="285.5" font-size="12.3" fill="#000" text-anchor="start" font-weight="normal" textLength="18.5" lengthAdjust="spacingAndGlyphs">PIC</text>
<text x="839.7" y="285.5" font-size="12.3" fill="#000" text-anchor="start" font-weight="normal" textLength="28.5" lengthAdjust="spacingAndGlyphs">point</text>
<defs><pattern id="cw" width="4" height="4" patternUnits="userSpaceOnUse"><rect width="4" height="4" fill="#FF00FF"/><rect x="1" y="2" width="2" height="1" fill="#fff"/><rect x="2" y="1" width="2" height="1" fill="#fff"/></pattern></defs>
<rect x="797" y="303" width="24" height="4" fill="#FF00FF"/>
<rect x="817" y="306" width="22" height="4" fill="#FF00FF"/>
<rect x="800" y="305" width="2" height="1" fill="#fff"/>
<rect x="799" y="306" width="2" height="1" fill="#fff"/>
<rect x="804" y="305" width="2" height="1" fill="#fff"/>
<rect x="803" y="306" width="2" height="1" fill="#fff"/>
<rect x="808" y="305" width="2" height="1" fill="#fff"/>
<rect x="807" y="306" width="2" height="1" fill="#fff"/>
<rect x="812" y="305" width="2" height="1" fill="#fff"/>
<rect x="811" y="306" width="2" height="1" fill="#fff"/>
<rect x="816" y="305" width="2" height="1" fill="#fff"/>
<rect x="815" y="306" width="2" height="1" fill="#fff"/>
<rect x="822" y="307" width="2" height="1" fill="#fff"/>
<rect x="821" y="308" width="2" height="1" fill="#fff"/>
<rect x="826" y="307" width="2" height="1" fill="#fff"/>
<rect x="825" y="308" width="2" height="1" fill="#fff"/>
<rect x="830" y="307" width="2" height="1" fill="#fff"/>
<rect x="829" y="308" width="2" height="1" fill="#fff"/>
<rect x="834" y="307" width="2" height="1" fill="#fff"/>
<rect x="833" y="308" width="2" height="1" fill="#fff"/>
<rect x="838" y="307" width="2" height="1" fill="#fff"/>
<rect x="837" y="308" width="2" height="1" fill="#fff"/>
<rect x="839" y="289" width="38" height="38" fill="#FF00FF"/>
<rect x="840" y="290" width="36" height="36" fill="#fff"/>
<rect x="842" y="292" width="32" height="32" fill="#FF00FF"/>
<rect x="843" y="293" width="30" height="30" fill="#D8D8D8"/>
<rect x="844" y="294" width="9" height="25" fill="#000"/>
<rect x="845" y="295" width="7" height="23" fill="#D0D0D0"/>
<rect x="845" y="302" width="7" height="1" fill="#000"/>
<rect x="845" y="310" width="7" height="1" fill="#000"/>
<rect x="848" y="296" width="2" height="1" fill="#000"/>
<rect x="848" y="298" width="2" height="4" fill="#000"/>
<rect x="848" y="304" width="2" height="1" fill="#000"/>
<rect x="848" y="306" width="2" height="4" fill="#000"/>
<rect x="847" y="309" width="1" height="1" fill="#000"/>
<rect x="847" y="312" width="2" height="5" fill="#000"/>
<rect x="849" y="314" width="2" height="1" fill="#000"/>
<rect x="850" y="313" width="1" height="1" fill="#000"/>
<rect x="849" y="315" width="1" height="1" fill="#000"/>
<rect x="850" y="316" width="1" height="1" fill="#000"/>
<rect x="854" y="294" width="19" height="10" fill="#404040"/>
<rect x="855" y="295" width="17" height="8" fill="#B8B8B8"/>
<text x="863.5" y="302" font-size="8" fill="#000" text-anchor="middle" font-weight="bold" font-family="Liberation Mono" letter-spacing="-0.8">123</text>
<rect x="841" y="304" width="1" height="9" fill="#000"/>
<rect x="842" y="305" width="1" height="1" fill="#000"/>
<rect x="842" y="311" width="1" height="1" fill="#000"/>
<rect x="843" y="306" width="1" height="1" fill="#000"/>
<rect x="843" y="310" width="1" height="1" fill="#000"/>
<rect x="844" y="307" width="1" height="3" fill="#000"/>
<rect x="842" y="306" width="1" height="5" fill="#fff"/>
<rect x="843" y="307" width="1" height="3" fill="#fff"/>
<rect x="850" y="318" width="16" height="8" fill="#FF00FF"/>
<rect x="852" y="320" width="5" height="1" fill="#fff"/>
<rect x="859" y="320" width="4" height="1" fill="#fff"/>
<rect x="852" y="322" width="2" height="2" fill="#fff"/>
<rect x="855" y="322" width="3" height="1" fill="#fff"/>
<rect x="861" y="322" width="2" height="2" fill="#fff"/>
</svg>
</body></html>
